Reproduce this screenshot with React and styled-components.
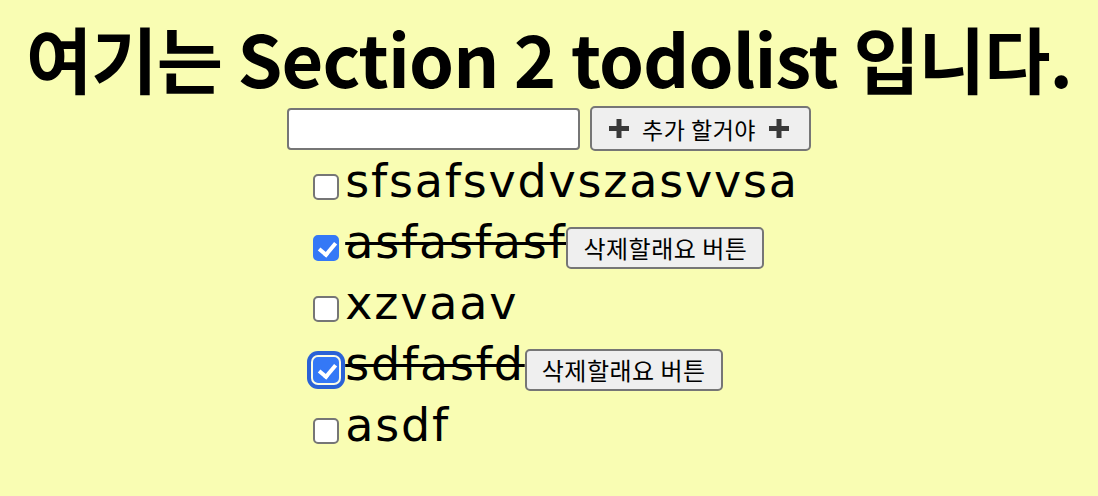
import React, { useState } from 'react';
import styled, { createGlobalStyle } from 'styled-components';

const GlobalStyle = createGlobalStyle`
    body {
        margin: 0;
        background: #f9fdb3;
        font-family: "Noto Sans CJK KR", "Noto Sans", sans-serif;
    }
`;

const initialTodos = [
    { id: 1, text: 'sfsafsvdvszasvvsa', done: false },
    { id: 2, text: 'asfasfasf', done: true },
    { id: 3, text: 'xzvaav', done: false },
    { id: 4, text: 'sdfasfd', done: true, focused: true },
    { id: 5, text: 'asdf', done: false },
];

// heavy plus, like the emoji in the add button
const PlusIcon = () => (
    <svg width="20" height="19" viewBox="0 0 20 19">
        <rect x="7.5" y="0" width="5" height="19" fill="#3a3a3a" />
        <rect x="0" y="7" width="20" height="5" fill="#3a3a3a" />
    </svg>
);

function App() {
    const [todos, setTodos] = useState(initialTodos);
    const [value, setValue] = useState('');

    const toggle = (id) => {
        setTodos(todos.map((t) => (t.id === id ? { ...t, done: !t.done } : t)));
    }

    const remove = (id) => {
        setTodos(todos.filter((t) => t.id !== id));
    }

    const add = () => {
        if (!value.trim()) return;
        setTodos([...todos, { id: Date.now(), text: value, done: false }]);
        setValue('');
    }

    return (
        <PageStyled>
            <GlobalStyle />
            <h1>여기는 Section 2 todolist 입니다.</h1>
            <div className="form-row">
                <TextInput value={value} onChange={(e) => setValue(e.target.value)} />
                <AddButton onClick={add}>
                    <PlusIcon />
                    <span>추가 할거야</span>
                    <PlusIcon />
                </AddButton>
            </div>
            <div className="list-wrap">
                <div className="list">
                    {todos.map((todo) => (
                        <TodoRow key={todo.id}>
                            <Check
                                type="checkbox"
                                checked={todo.done}
                                $focused={todo.focused}
                                onChange={() => toggle(todo.id)}
                            />
                            <TodoText $done={todo.done}>{todo.text}</TodoText>
                            {todo.done && (
                                <DeleteButton onClick={() => remove(todo.id)}>삭제할래요 버튼</DeleteButton>
                            )}
                        </TodoRow>
                    ))}
                </div>
            </div>
        </PageStyled>
    );
}

const PageStyled = styled.div`
    padding-top: 14px;
    h1 {
        margin: 0;
        text-align: center;
        font-size: 72px;
        font-weight: 700;
        line-height: 86px;
        letter-spacing: -0.9px;
        white-space: nowrap;
    }
    .form-row {
        display: flex;
        justify-content: center;
        align-items: center;
        gap: 10px;
        margin-top: 6px;
    }
    .list-wrap {
        display: flex;
        justify-content: center;
        padding-left: 14px;
    }
    .list {
        width: fit-content;
    }
`;

const TextInput = styled.input`
    width: 293px;
    height: 42px;
    box-sizing: border-box;
    border: 2px solid #767676;
    border-radius: 4px;
    background: #fff;
    font-size: 20px;
`;

const AddButton = styled.button`
    display: flex;
    align-items: center;
    gap: 13px;
    box-sizing: border-box;
    width: 221px;
    height: 45px;
    padding: 0 16px 0 17px;
    border: 2px solid #767676;
    border-radius: 5px;
    background: #efefef;
    font-family: "Noto Sans CJK KR", sans-serif;
    font-size: 23px;
    letter-spacing: 0.5px;
    color: #000;
`;

const TodoRow = styled.div`
    font-family: "DejaVu Sans", "Noto Sans CJK KR", sans-serif;
    font-size: 46px;
    line-height: 61px;
    white-space: nowrap;
`;

const Check = styled.input`
    appearance: none;
    position: relative;
    box-sizing: border-box;
    width: 26px;
    height: 26px;
    margin: 0 6px 0 0;
    vertical-align: -3px;
    border: 2px solid #767676;
    border-radius: 5px;
    background: #fff;
    &:checked {
        border-color: #3478f6;
        background: #3478f6;
    }
    &:checked::after {
        content: '';
        position: absolute;
        left: 7px;
        top: 2px;
        width: 7px;
        height: 13px;
        border: solid #fff;
        border-width: 0 4px 4px 0;
        transform: rotate(40deg);
    }
    ${(p) => p.$focused && `
        outline: none;
        box-shadow: 0 0 0 2px #fbfde6, 0 0 0 6px #2a62d6;
    `}
`;

const TodoText = styled.span`
    text-decoration: ${(p) => (p.$done ? 'line-through' : 'none')};
    text-decoration-thickness: 3px;
    letter-spacing: 1.8px;
`;

const DeleteButton = styled.button`
    height: 42px;
    padding: 0 15px;
    border: 2px solid #767676;
    border-radius: 5px;
    background: #efefef;
    font-family: "Noto Sans CJK KR", sans-serif;
    font-size: 24px;
    letter-spacing: 0.5px;
    color: #000;
    vertical-align: baseline;
`;

export default App
